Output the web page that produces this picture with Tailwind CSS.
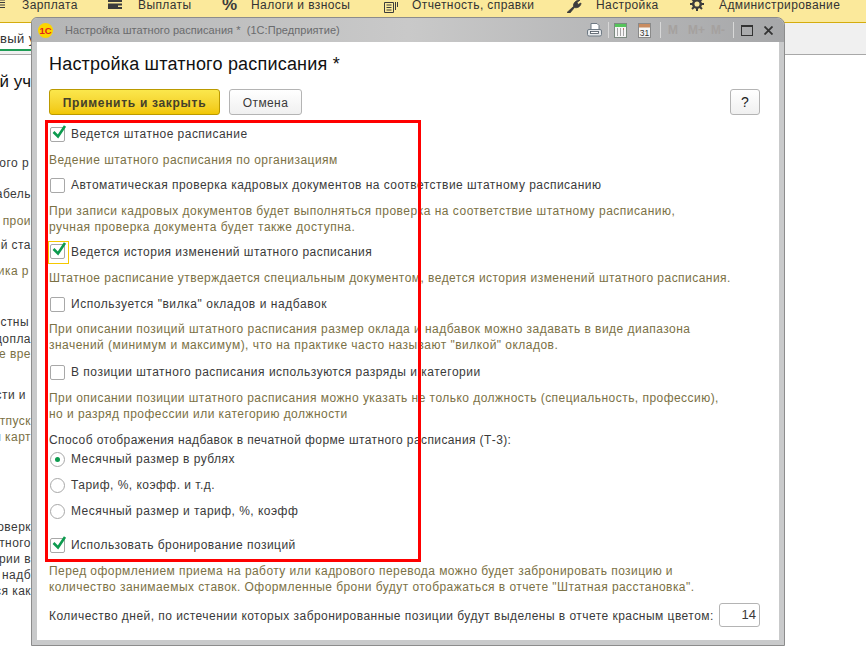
<!DOCTYPE html>
<html lang="ru">
<head>
<meta charset="UTF-8">
<title>Настройка штатного расписания</title>
<script src="https://cdn.jsdelivr.net/npm/@tailwindcss/browser@4"></script>
</head>
<body class="relative w-[866px] h-[660px] overflow-hidden bg-white font-['Liberation_Sans',Arial,sans-serif] text-[12px] text-[#3a3a3a]">

<!-- top section panel -->
<div class="h-[23px] bg-[#fbe99b] border-b border-[#d4ac0d] overflow-hidden">
    <div class="h-[9px] flex items-center text-[#333] tracking-[0.4px]">
        <svg class="self-start w-[5px] h-[9px]" viewBox="0 0 5 9"><path d="M0 0h5M0 2.500h5M0 5h5M0 7.500h5" stroke="#3c3c3c" stroke-width="1.200"/></svg>
        <span class="ml-[17px] w-[86px]">Зарплата</span>
        <svg class="self-start w-[14px] h-[9px]" viewBox="0 0 14 9"><path d="M0 0h14v2H0zM0 3.500h14V9H0z" fill="#3c3c3c"/><path d="M10 5.500h4v1.500h-4z" fill="#fbe99b"/></svg>
        <span class="ml-[16px] w-[84px]">Выплаты</span>
        <span class="w-[22px] text-[17px] font-bold text-[#3c3c3c] tracking-normal">%</span>
        <span class="ml-[7px] w-[133px]">Налоги и взносы</span>
        <svg class="self-start mt-[2px] shrink-0 w-[14px] h-[11px]" viewBox="0 0 14 11"><path d="M.5.500h9v10h-9zM2.500 3h5M2.500 5.500h5M2.500 8h5M11.500 0v8M13.500 0v5" fill="none" stroke="#3c3c3c"/></svg>
        <span class="ml-[14px] w-[154px]">Отчетность, справки</span>
        <svg class="self-start shrink-0 w-[16px] h-[13px]" viewBox="0 0 16 13"><path d="M1 12.500 7.500 6.500C7 3 10 0 14 0l-3 2.500 1 2 3-1.500c0 3-3 5.500-6.500 4.500L3.500 13.500z" fill="#3c3c3c" stroke="#3c3c3c" stroke-width=".8"/></svg>
        <span class="ml-[14px] w-[94px]">Настройка</span>
        <svg class="self-start -mt-[3px] shrink-0 w-[14px] h-[14px]" viewBox="0 0 14 14"><circle cx="7" cy="7" r="3.800" fill="none" stroke="#3c3c3c" stroke-width="2.500"/><path d="M7 0v3M7 11v3M0 7h3M11 7h3M2 2l2 2M10 10l2 2M12 2l-2 2M2 12l2-2" stroke="#3c3c3c" stroke-width="2"/></svg>
        <span class="ml-[15px]">Администрирование</span>
    </div>
</div>

<!-- tab strip behind the window -->
<div class="h-[32px] bg-[#f0f0f0] border-b border-[#a8a8a8]">
    <div class="w-[31px] h-[28px] bg-white border-b-2 border-[#1f9d55] overflow-hidden whitespace-nowrap text-[13px] leading-[16px] tracking-[0.4px] text-[#333] pt-[8px]">вый учет</div>
</div>

<!-- page text behind the window, cut off by the window edge -->
<div class="w-[31px] overflow-hidden whitespace-nowrap flex flex-col items-end leading-[16px] tracking-[0.45px]">
    <div class="mt-[17px] text-[17px] leading-[20px] text-[#111] tracking-normal">й уч</div>
    <div class="mt-[63px] pr-[2px]">ого р</div>
    <div class="mt-[15px]">абель</div>
    <div class="mt-[11px] text-[#7b7145]">прои</div>
    <div class="mt-[8px]">ой ста</div>
    <div class="mt-[10px] pr-[2px] text-[#7b7145]">ика р</div>
    <div class="mt-[35px] pr-[2px]">остны</div>
    <div class="mt-[1px]">допла</div>
    <div class="-mt-[1px] text-[#7b7145]">ее вре</div>
    <div class="mt-[25px] pr-[5px]">сти и</div>
    <div class="mt-[10px] text-[#7b7145]">отпуск</div>
    <div class="text-[#7b7145]">и карт</div>
    <div class="mt-[74px]">оверк</div>
    <div>тного</div>
    <div>ории в</div>
    <div>надб</div>
    <div>ся как</div>
</div>

<!-- settings window -->
<div class="absolute left-[31px] top-[17px] w-[754px] h-[629px] bg-[#c9cacb] border border-[#8c8c8c] rounded-tr-[8px] rounded-tl-[6px] flex flex-col">
    <div class="h-[24px] shrink-0 flex items-center bg-gradient-to-r from-[#b4b5b6] via-[#c9c9c9] to-[#a6a7a9] rounded-tr-[8px] rounded-tl-[6px] text-[#6a6b6d] text-[11px] tracking-[0.05px]">
        <svg class="ml-[6px] w-[15px] h-[15px]" viewBox="0 0 15 15"><circle cx="7.500" cy="7.500" r="7.500" fill="#fbd500"/><text x="7.500" y="10.800" text-anchor="middle" font-size="9.500" font-weight="700" fill="#e0201b" font-family="Liberation Sans">1С</text></svg>
        <span class="ml-[12px]">Настройка штатного расписания *&nbsp; (1С:Предприятие)</span>
        <div class="ml-auto flex items-center">
            <svg class="w-[15px] h-[14px]" viewBox="0 0 15 14"><path d="M4 .5h6l2 2v4H4z" fill="#fff" stroke="#6f7a84"/><rect x=".5" y="6.500" width="14" height="6.500" rx="1.500" fill="#e4e7ea" stroke="#6f7a84"/><rect x="3.500" y="8.500" width="8" height="2" fill="#fff" stroke="#48525c" stroke-width=".8"/></svg>
            <div class="ml-[6px] w-px h-[16px] bg-[#d8d8d8]"></div>
            <svg class="ml-[5px] w-[13px] h-[15px]" viewBox="0 0 13 15"><rect x=".5" y=".5" width="12" height="14" fill="#f5f5f5" stroke="#7c8a80"/><rect x="1" y="1" width="11" height="3" fill="#55c45a"/><path d="M3 6h1M6 6h1M9 6h1M3 8h1M6 8h1M9 8h1M3 10h1M6 10h1M9 10h1M3 12h1M6 12h1M9 12h1" stroke="#555"/><path d="M9 6h1" stroke="#d33"/></svg>
            <svg class="ml-[11px] w-[13px] h-[16px]" viewBox="0 0 13 16"><rect x=".5" y="1.500" width="12" height="14" fill="#f5f5f5" stroke="#8a8a8a"/><rect x="1" y="2" width="11" height="3.500" fill="#c98b5f"/><text x="6.500" y="13.500" text-anchor="middle" font-size="8.500" fill="#333" font-family="Liberation Sans">31</text></svg>
            <div class="ml-[9px] w-px h-[16px] bg-[#d8d8d8]"></div>
            <span class="ml-[7px] w-[20px] text-[12px] font-bold text-[#a5a19f]">M</span>
            <span class="w-[23px] text-[12px] font-bold text-[#a5a19f]">M+</span>
            <span class="w-[22px] text-[12px] font-bold text-[#a5a19f]">M-</span>
            <div class="w-px h-[16px] bg-[#d8d8d8]"></div>
            <div class="ml-[7px] w-[12px] h-[11px] border border-t-2 border-[#333]"></div>
            <svg class="ml-[11px] mr-[11px] w-[9px] h-[9px]" viewBox="0 0 9 9"><path d="M.5.500l8 8M8.500.500l-8 8" stroke="#333" stroke-width="1.800"/></svg>
        </div>
    </div>

    <div class="relative mx-[5px] h-[598px] bg-white pl-[12px] pr-[19px] flex flex-col">
        <h1 class="mt-[10px] h-[24px] leading-[24px] text-[18px] text-[#111] tracking-[0.2px]">Настройка штатного расписания *</h1>

        <div class="mt-[13px] h-[26px] flex">
            <button class="w-[171px] pt-[1px] rounded-[3px] border border-[#bb9a00] bg-gradient-to-b from-[#fbe74c] to-[#f1c700] font-bold text-[#44402a] tracking-[0.7px]">Применить и закрыть</button>
            <button class="ml-[9px] w-[73px] pt-[1px] rounded-[3px] border border-[#b4b4b4] bg-gradient-to-b from-white to-[#f0f0f0] tracking-[0.4px]">Отмена</button>
            <button class="ml-auto w-[30px] rounded-[3px] border border-[#b4b4b4] bg-gradient-to-b from-white to-[#f0f0f0] text-[14px] text-[#222]">?</button>
        </div>

        <label class="mt-[7px] h-[24px] flex items-center tracking-[0.47px]">
            <span class="relative w-[15px] h-[15px] mx-[1px] rounded-[2px] border border-[#a8a8a8]"><svg class="absolute -top-[4px] left-[1px] w-[15px] h-[15px]" viewBox="0 0 15 15"><path d="M1.500 8 6 12.500 13 2" fill="none" stroke="#0d9b4f" stroke-width="2.600"/></svg></span>
            <span class="ml-[5px]">Ведется штатное расписание</span>
        </label>
        <p class="mt-[6px] h-[16px] leading-[16px] text-[#7b7145] tracking-[0.47px]">Ведение штатного расписания по организациям</p>
        <label class="mt-[5px] h-[24px] flex items-center tracking-[0.47px]">
            <span class="w-[15px] h-[15px] mx-[1px] rounded-[2px] border border-[#a8a8a8]"></span>
            <span class="ml-[5px]">Автоматическая проверка кадровых документов на соответствие штатному расписанию</span>
        </label>
        <p class="mt-[6px] leading-[16px] text-[#7b7145] tracking-[0.5px]">При записи кадровых документов будет выполняться проверка на соответствие штатному расписанию,<br>ручная проверка документа будет также доступна.</p>
        <label class="mt-[5px] h-[24px] flex items-center tracking-[0.47px]">
            <span class="relative w-[15px] h-[15px] mx-[1px] -mt-[1px] rounded-[2px] border border-[#a8a8a8]">
                <span class="absolute -left-[3px] -top-[4px] w-[21px] h-[23px] border border-[#f5c800]"></span>
                <svg class="absolute -top-[4px] left-[1px] w-[15px] h-[15px]" viewBox="0 0 15 15"><path d="M1.500 8 6 12.500 13 2" fill="none" stroke="#0d9b4f" stroke-width="2.600"/></svg>
            </span>
            <span class="ml-[5px]">Ведется история изменений штатного расписания</span>
        </label>
        <p class="mt-[6px] h-[16px] leading-[16px] text-[#7b7145] tracking-[0.46px]">Штатное расписание утверждается специальным документом, ведется история изменений штатного расписания.</p>
        <label class="mt-[6px] h-[24px] flex items-center tracking-[0.55px]">
            <span class="w-[15px] h-[15px] mx-[1px] rounded-[2px] border border-[#a8a8a8]"></span>
            <span class="ml-[5px]">Используется "вилка" окладов и надбавок</span>
        </label>
        <p class="mt-[5px] leading-[16px] text-[#7b7145] tracking-[0.47px]">При описании позиций штатного расписания размер оклада и надбавок можно задавать в виде диапазона<br>значений (минимум и максимум), что на практике часто называют "вилкой" окладов.</p>
        <label class="mt-[7px] h-[24px] flex items-center tracking-[0.5px]">
            <span class="w-[15px] h-[15px] mx-[1px] rounded-[2px] border border-[#a8a8a8]"></span>
            <span class="ml-[5px]">В позиции штатного расписания используются разряды и категории</span>
        </label>
        <p class="mt-[6px] leading-[16px] text-[#7b7145] tracking-[0.46px]">При описании позиции штатного расписания можно указать не только должность (специальность, профессию),<br>но и разряд профессии или категорию должности</p>
        <p class="mt-[10px] h-[16px] leading-[16px] tracking-[0.4px]">Способ отображения надбавок в печатной форме штатного расписания (Т-3):</p>
        <label class="mt-[3px] h-[16px] flex items-center tracking-[0.47px]">
            <span class="flex items-center justify-center w-[15px] h-[15px] mx-[1px] rounded-full border border-[#a8a8a8]"><span class="w-[5px] h-[5px] rounded-full bg-[#0d9b4f]"></span></span>
            <span class="ml-[5px]">Месячный размер в рублях</span>
        </label>
        <label class="mt-[10px] h-[16px] flex items-center tracking-[0.47px]">
            <span class="w-[15px] h-[15px] mx-[1px] rounded-full border border-[#a8a8a8]"></span>
            <span class="ml-[5px]">Тариф, %, коэфф. и т.д.</span>
        </label>
        <label class="mt-[10px] h-[16px] flex items-center tracking-[0.47px]">
            <span class="w-[15px] h-[15px] mx-[1px] rounded-full border border-[#a8a8a8]"></span>
            <span class="ml-[5px]">Месячный размер и тариф, %, коэфф</span>
        </label>
        <label class="mt-[14px] h-[24px] flex items-center tracking-[0.47px]">
            <span class="relative w-[15px] h-[15px] mx-[1px] rounded-[2px] border border-[#a8a8a8]"><svg class="absolute -top-[4px] left-[1px] w-[15px] h-[15px]" viewBox="0 0 15 15"><path d="M1.500 8 6 12.500 13 2" fill="none" stroke="#0d9b4f" stroke-width="2.600"/></svg></span>
            <span class="ml-[5px]">Использовать бронирование позиций</span>
        </label>
        <p class="mt-[6px] leading-[16px] text-[#7b7145] tracking-[0.44px]">Перед оформлением приема на работу или кадрового перевода можно будет забронировать позицию и<br>количество занимаемых ставок. Оформленные брони будут отображаться в отчете "Штатная расстановка".</p>
        <div class="mt-[8px] h-[24px] flex items-center justify-between tracking-[0.46px]">
            <span class="pt-[2px]">Количество дней, по истечении которых забронированные позиции будут выделены в отчете красным цветом:</span>
            <span class="w-[41px] h-[24px] leading-[22px] rounded-[3px] border border-[#b4b4b4] text-right pr-[3px] text-[13px] tracking-normal">14</span>
        </div>
    </div>
</div>

<!-- red highlight drawn on top of the screenshot -->
<div class="absolute left-[45px] top-[120px] w-[376px] h-[442px] border-[3px] border-[#ff0000]"></div>

</body>
</html>
